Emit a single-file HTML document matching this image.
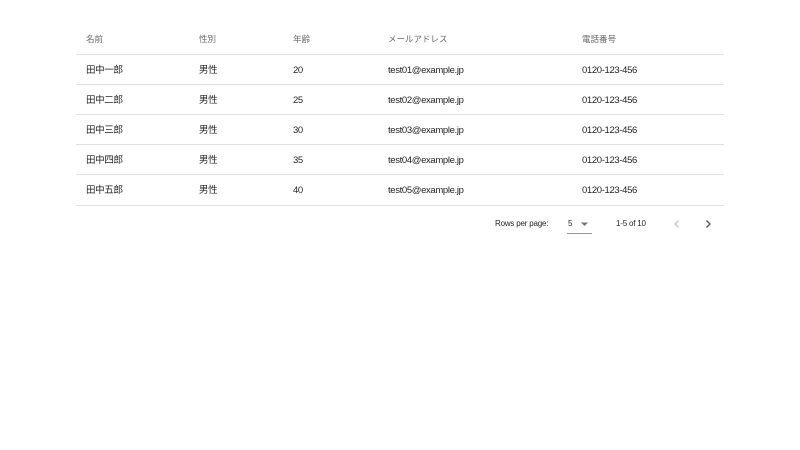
<!DOCTYPE html>
<html><head><meta charset="utf-8"><style>
body{margin:0;width:800px;height:450px;background:#fff;font-family:"Liberation Sans","Noto Sans CJK JP",sans-serif;position:relative;overflow:hidden}
.l{position:absolute;left:76px;width:648px;height:1px;background:#e0e0e0}
.t{position:absolute;white-space:nowrap;line-height:1}
.h{font-size:8.5px;color:rgba(0,0,0,.6)}
.b{font-size:9.5px;color:rgba(0,0,0,.87);letter-spacing:-0.35px}
.p{font-size:8px;color:rgba(0,0,0,.87);letter-spacing:-0.2px}
</style></head><body>
<div class="t h" style="left:86px;top:35px">名前</div>
<div class="t h" style="left:199px;top:35px">性別</div>
<div class="t h" style="left:293px;top:35px">年齢</div>
<div class="t h" style="left:388px;top:35px">メールアドレス</div>
<div class="t h" style="left:582px;top:35px">電話番号</div>
<div class="l" style="top:54px"></div>
<div class="l" style="top:84px"></div>
<div class="l" style="top:114px"></div>
<div class="l" style="top:144px"></div>
<div class="l" style="top:174px"></div>
<div class="l" style="top:205px"></div>

<div class="t b" style="left:86px;top:66px">田中一郎</div><div class="t b" style="left:199px;top:66px">男性</div><div class="t b" style="left:293px;top:66px">20</div><div class="t b" style="left:388px;top:66px">test01@example.jp</div><div class="t b" style="left:582px;top:66px">0120-123-456</div>
<div class="t b" style="left:86px;top:96px">田中二郎</div><div class="t b" style="left:199px;top:96px">男性</div><div class="t b" style="left:293px;top:96px">25</div><div class="t b" style="left:388px;top:96px">test02@example.jp</div><div class="t b" style="left:582px;top:96px">0120-123-456</div>
<div class="t b" style="left:86px;top:126px">田中三郎</div><div class="t b" style="left:199px;top:126px">男性</div><div class="t b" style="left:293px;top:126px">30</div><div class="t b" style="left:388px;top:126px">test03@example.jp</div><div class="t b" style="left:582px;top:126px">0120-123-456</div>
<div class="t b" style="left:86px;top:156px">田中四郎</div><div class="t b" style="left:199px;top:156px">男性</div><div class="t b" style="left:293px;top:156px">35</div><div class="t b" style="left:388px;top:156px">test04@example.jp</div><div class="t b" style="left:582px;top:156px">0120-123-456</div>
<div class="t b" style="left:86px;top:186px">田中五郎</div><div class="t b" style="left:199px;top:186px">男性</div><div class="t b" style="left:293px;top:186px">40</div><div class="t b" style="left:388px;top:186px">test05@example.jp</div><div class="t b" style="left:582px;top:186px">0120-123-456</div>

<div class="t p" style="left:495px;top:220px">Rows per page:</div>
<div class="t p" style="left:568px;top:220px">5</div>
<svg style="position:absolute;left:579px;top:219px" width="12" height="10"><path d="M2 3.5h7l-3.5 3.5z" fill="#757575"/></svg>
<div style="position:absolute;left:567px;top:233px;width:25px;height:1px;background:#999"></div>
<div class="t p" style="left:616px;top:220px">1-5 of 10</div>
<svg style="position:absolute;left:671px;top:218px" width="12" height="12"><path d="M7.5 2.5L4 6l3.5 3.5" fill="none" stroke="#c4c4c4" stroke-width="1.3"/></svg>
<svg style="position:absolute;left:702px;top:218px" width="12" height="12"><path d="M4.5 2.5L8 6l-3.5 3.5" fill="none" stroke="#555" stroke-width="1.3"/></svg>
</body></html>
